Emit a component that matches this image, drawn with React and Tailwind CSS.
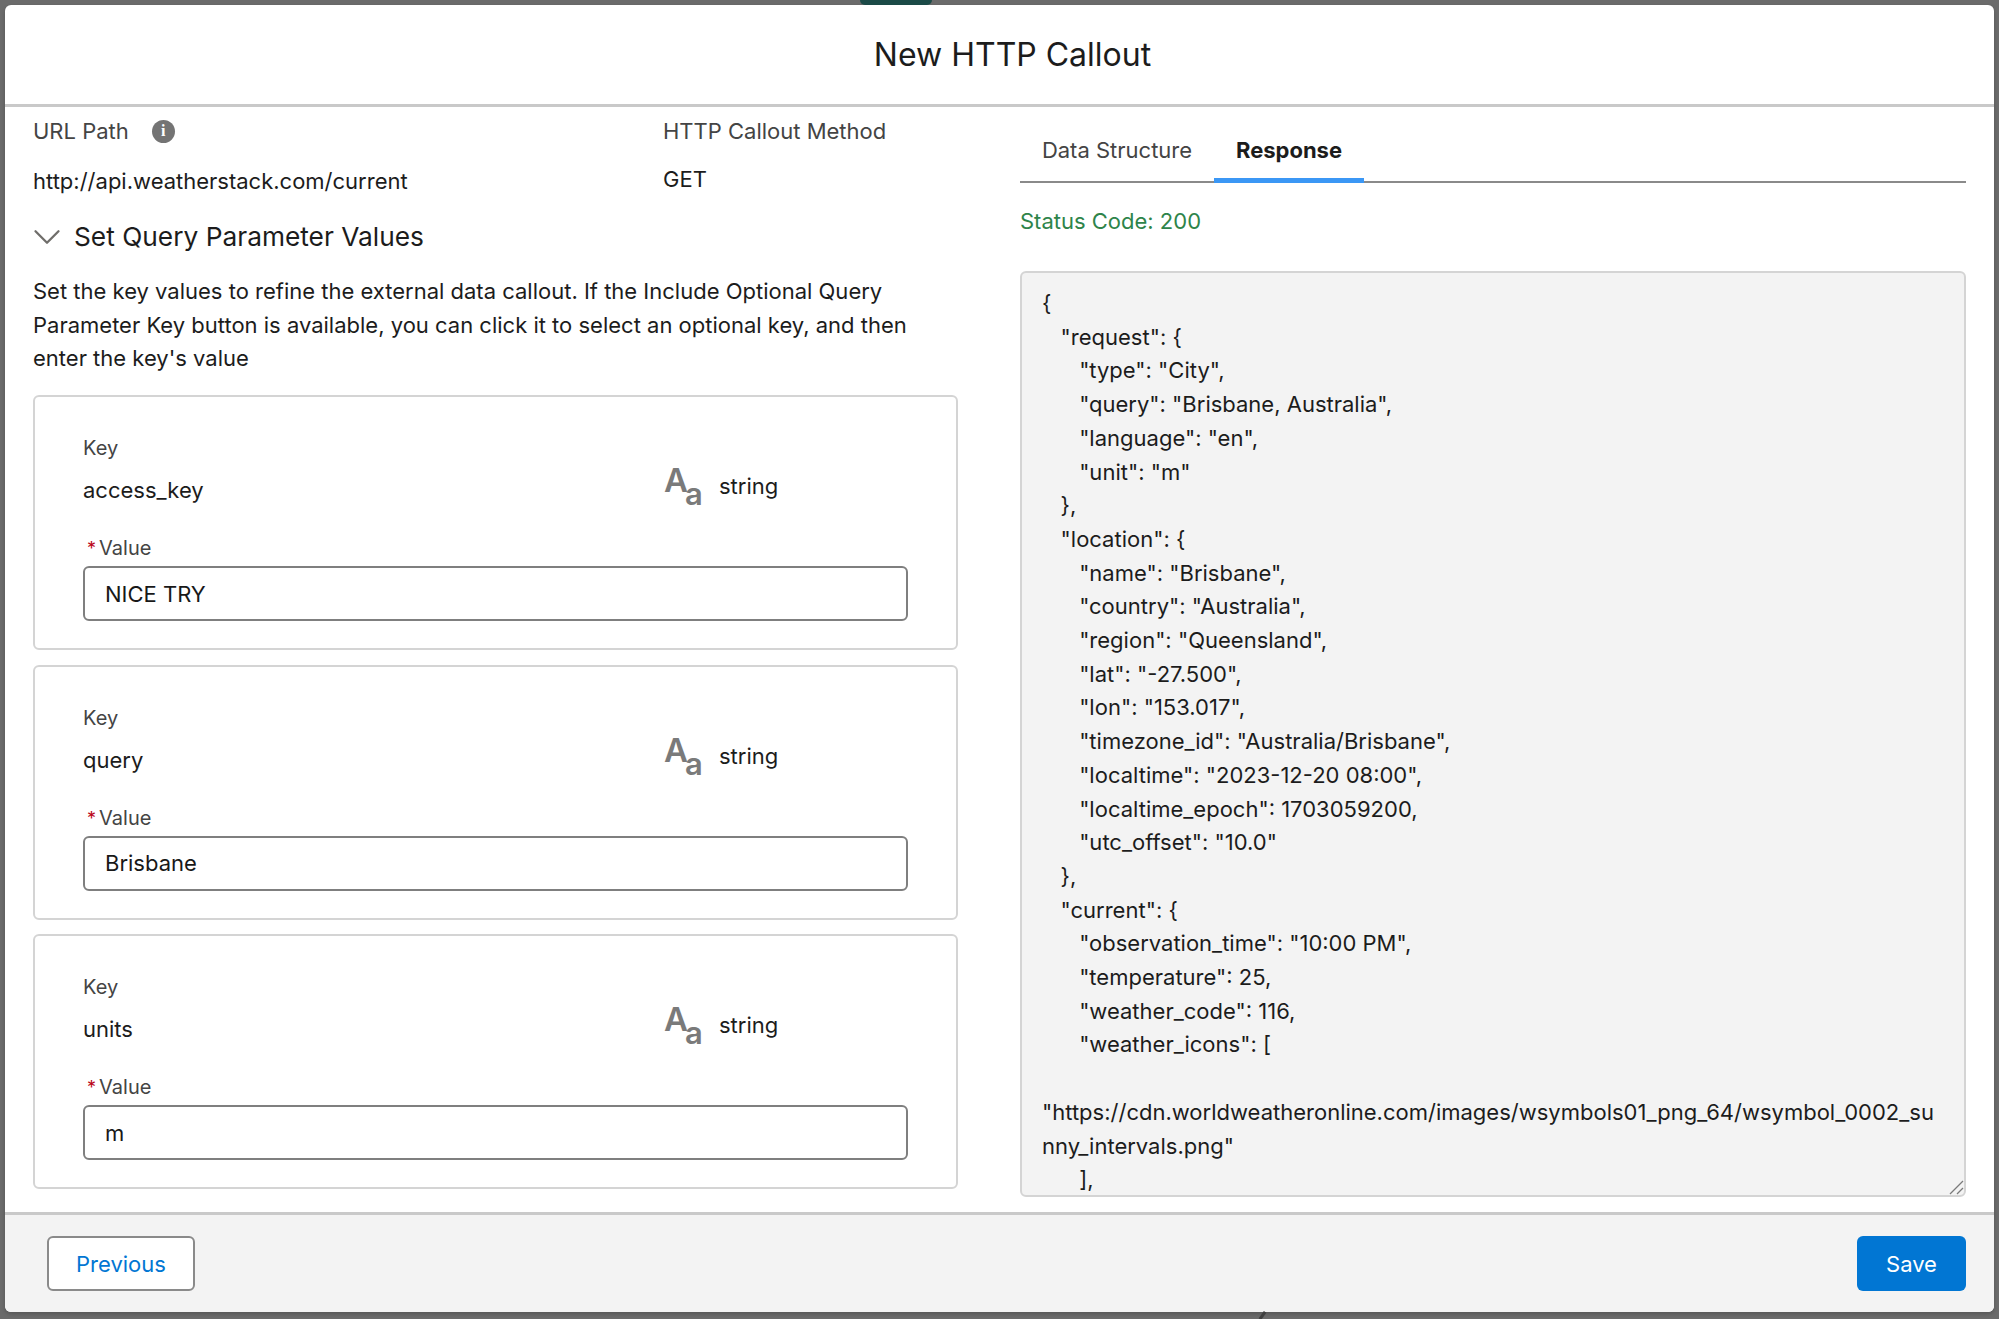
import { ChevronDown } from "lucide-react";

const responseText = `{
   "request": {
      "type": "City",
      "query": "Brisbane, Australia",
      "language": "en",
      "unit": "m"
   },
   "location": {
      "name": "Brisbane",
      "country": "Australia",
      "region": "Queensland",
      "lat": "-27.500",
      "lon": "153.017",
      "timezone_id": "Australia/Brisbane",
      "localtime": "2023-12-20 08:00",
      "localtime_epoch": 1703059200,
      "utc_offset": "10.0"
   },
   "current": {
      "observation_time": "10:00 PM",
      "temperature": 25,
      "weather_code": 116,
      "weather_icons": [
         "https://cdn.worldweatheronline.com/images/wsymbols01_png_64/wsymbol_0002_sunny_intervals.png"
      ],`;

const params = [
    { name: "access_key", value: "NICE TRY" },
    { name: "query", value: "Brisbane" },
    { name: "units", value: "m" },
];

function ParamCard({ name, value }) {
    return (
        <div className="h-[255px] rounded-md border-2 border-[#d4d4d4] pl-[48px] pr-[48px] pt-[39px]">
            <div className="grid grid-cols-[580px_1fr]">
                <div>
                    <div className="text-[20px] leading-[24px] text-[#444444]">Key</div>
                    <div className="mt-[18px] leading-[24px]">{name}</div>
                </div>
                <div className="flex items-start gap-[15px] pt-[32px]">
                    <span aria-hidden="true" className="relative block h-[42px] w-[41px] text-[#7a7a7a]">
                        <span className="absolute left-[1px] top-[-4px] text-[33px] leading-[32px] font-semibold">A</span>
                        <span className="absolute left-[22px] top-[11px] text-[31px] leading-[30px] font-semibold">a</span>
                    </span>
                    <span className="leading-[36px]">string</span>
                </div>
            </div>
            <div className="mt-[26px] text-[20px] leading-[24px] text-[#444444]">
                <span className="ml-[4px] mr-[3px] text-[18px] text-[#ba0517]">*</span>Value
            </div>
            <input
                readOnly
                defaultValue={value}
                className="mt-[5px] block h-[55px] w-full rounded-md border-2 border-[#7f7f7f] bg-white px-[20px] text-[#181818] outline-none"
            />
        </div>
    );
}

export default function App() {
    return (
        <div className="relative h-screen w-screen overflow-hidden bg-[#6b6b6b] pl-[5px] pr-[5px] pt-[5px] font-['Inter',sans-serif] text-[22px] text-[#1c1c1c]">
            {/* page behind the modal */}
            <div className="absolute left-[860px] top-0 h-[5px] w-[72px] rounded-b-[10px] bg-[#1b4a47]" />
            <div className="absolute bottom-[-1px] left-[1261px] h-[9px] w-[3px] rotate-[35deg] bg-[#3f3f3f]" />

            <div className="flex h-[1307px] flex-col overflow-hidden rounded-md bg-white shadow-[0_2px_4px_rgba(0,0,0,0.2)]">
                <div className="flex h-[102px] shrink-0 items-center justify-center border-b-[3px] border-[#c9c9c9] pl-[26px]">
                    <h1 className="text-[32px] font-normal">New HTTP Callout</h1>
                </div>

                <div className="flex min-h-0 flex-1">
                    {/* left column */}
                    <div className="w-[953px] shrink-0 pl-[28px]">
                        <div className="grid grid-cols-[630px_1fr] pt-[7px]">
                            <div className="flex h-[34px] items-center gap-[23px] text-[#444444]">
                                URL Path
                                <span className="flex h-[23px] w-[23px] items-center justify-center rounded-full bg-[#747474] font-['Liberation_Serif',serif] text-[16px] font-bold text-white">
                                    i
                                </span>
                            </div>
                            <div className="flex h-[34px] items-center text-[#444444]">HTTP Callout Method</div>
                            <div className="mt-[16px] leading-[34px]">http://api.weatherstack.com/current</div>
                            <div className="mt-[14px] leading-[34px]">GET</div>
                        </div>

                        <div className="mt-[19px] flex h-[40px] items-center gap-[4px]">
                            <ChevronDown className="ml-[-9px] h-[46px] w-[46px] shrink-0 text-[#706e6b]" strokeWidth={1.2} />
                            <span className="text-[26.3px]">Set Query Parameter Values</span>
                        </div>

                        <p className="mt-[18px] leading-[33.7px]">
                            Set the key values to refine the external data callout. If the Include Optional Query
                            <br />
                            Parameter Key button is available, you can click it to select an optional key, and then
                            <br />
                            enter the key's value
                        </p>

                        <div className="mt-[19px] flex w-[925px] flex-col gap-[14.5px]">
                            {params.map((p) => (
                                <ParamCard key={p.name} name={p.name} value={p.value} />
                            ))}
                        </div>
                    </div>

                    {/* right column */}
                    <div className="min-w-0 flex-1 pl-[62px] pr-[28px]">
                        <div className="mt-[20px] flex h-[56px] border-b-2 border-[#8a8a8a]">
                            <button className="mb-[-2px] flex h-[56px] w-[194px] items-center justify-center pb-[10px] text-[#444444]">
                                Data Structure
                            </button>
                            <button className="mb-[-2px] flex h-[56px] w-[150px] items-center justify-center border-b-[5px] border-[#3b97f5] pb-[5px] font-bold">
                                Response
                            </button>
                        </div>
                        <div className="mt-[21px] leading-[34px] text-[#2e844a]">Status Code: 200</div>
                        <div className="relative mt-[33px] h-[926px] overflow-hidden whitespace-pre-wrap break-words rounded-md border-2 border-[#d4d4d4] bg-[#f3f3f3] pb-0 pl-[20px] pr-[24px] pt-[14px] leading-[33.7px]">
                            {responseText}
                            <svg className="absolute bottom-0 right-0 h-[15px] w-[15px]" viewBox="0 0 15 15" fill="none" stroke="#7a7a7a" strokeWidth="1.3">
                                <path d="M1 14 L14 1" />
                                <path d="M8 14 L14 8" />
                            </svg>
                        </div>
                    </div>
                </div>

                <div className="flex h-[100px] shrink-0 items-center justify-between border-t-[3px] border-[#c9c9c9] bg-[#f3f3f3] pl-[42px] pr-[28px]">
                    <button className="h-[55px] w-[148px] rounded-md border-2 border-[#8a8a8a] bg-white pt-[2px] text-[#0176d3]">
                        Previous
                    </button>
                    <button className="h-[55px] w-[109px] rounded-md bg-[#0176d3] pt-[2px] text-white">Save</button>
                </div>
            </div>
        </div>
    );
}
